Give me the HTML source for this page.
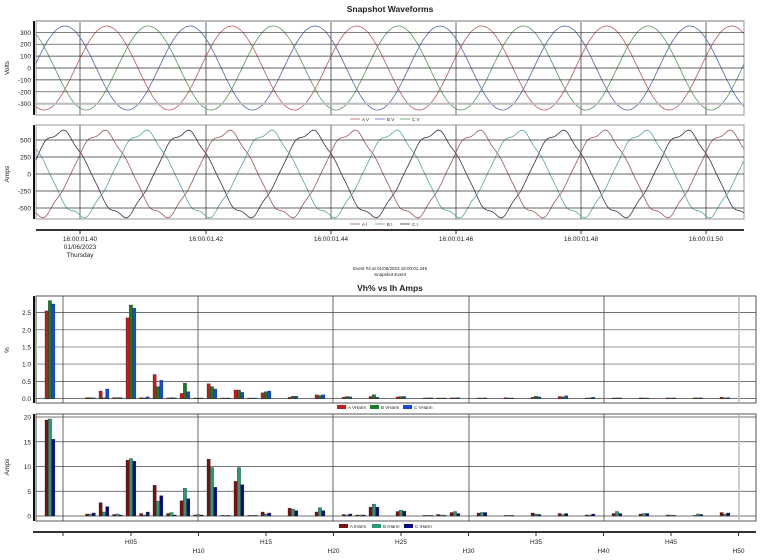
<!DOCTYPE html>
<html><head><meta charset="utf-8"><style>
html,body{margin:0;padding:0;background:#fff;width:768px;height:560px;overflow:hidden}
svg{display:block;font-family:"Liberation Sans",sans-serif}
</style></head><body>
<svg id="s" width="768" height="560" viewBox="0 0 768 560" xmlns="http://www.w3.org/2000/svg"></svg>
<script>
var s=document.getElementById('s'),o='';
function L(x1,y1,x2,y2,c,w){o+='<line x1="'+x1+'" y1="'+y1+'" x2="'+x2+'" y2="'+y2+'" stroke="'+c+'" stroke-width="'+(w||1)+'"/>';}
function T(x,y,t,sz,a,extra){o+='<text x="'+x+'" y="'+y+'" font-size="'+sz+'" text-anchor="'+(a||'middle')+'" fill="#222" '+(extra||'')+'>'+t+'</text>';}
function R(x,y,w,h,c,st){o+='<rect x="'+x+'" y="'+y+'" width="'+w+'" height="'+h+'" fill="'+c+'" '+(st||'')+'/>';}
// titles
T(390,12,'Snapshot Waveforms',8.5,'middle','font-weight="bold"');
// waveform plots
var X0=36,X1=744,vt=[80,206,331,456,581,706];
function wave(top,bot,y0,scale,amp,ph,cols,noise){
  R(X0,top,X1-X0,bot-top,'#fff','stroke="#999" stroke-width="1"');
  vt.forEach(function(x){L(x,top,x,bot,'#444',0.8)});
  for(var k=0;k<3;k++){var d='';for(var x=X0;x<=X1;x+=1){var t=(x-ph-k*41.7)/125*2*Math.PI;var v=Math.cos(t);if(noise)v+=0.04*Math.sin(t*5)+0.03*Math.sin(t*7);var y=y0-amp*v;d+=(x==X0?'M':'L')+x+' '+y.toFixed(1);}
  o+='<path d="'+d+'" fill="none" stroke="'+cols[k]+'" stroke-width="0.8"/>';}
  L(34,top,34,bot,'#111',2);
}
// volt gridlines
wave(21,115,68,11.9,42,65,['#5068b8','#c05858','#58985a'],false);
[300,200,100,0,-100,-200,-300].forEach(function(v){var y=68-v*0.119;L(X0,y,X1,y,v==-300?'#bbb':'#333',v==-300?2:0.7);T(31,y+2.5,v,6.5,'end');});
L(X0,21,X1,21,'#bbb',2);
T(9,68,'Volts',6.5,'middle','transform="rotate(-90 9 68)"');
// legend volts
[['#c05858','A V',360],['#5068b8','B V',385],['#58985a','C V',410]].forEach(function(l){L(l[2]-10,119,l[2],119,l[0],0.8);T(l[2]+2,121,l[1],4.5,'start');});
// current
wave(125,219,174,0.068,42,60,['#403050','#a05858','#58a8a0'],true);
[500,250,0,-250,-500].forEach(function(v){var y=174-v*0.068;L(X0,y,X1,y,'#333',0.7);T(31,y+2.5,v,6.5,'end');});
T(9,174,'Amps',6.5,'middle','transform="rotate(-90 9 174)"');
[['#a05858','A I',360],['#58a8a0','B I',385],['#403050','C I',410]].forEach(function(l){L(l[2]-10,224,l[2],224,l[0],0.8);T(l[2]+2,226,l[1],4.5,'start');});
// time axis
L(36,230,744,230,'#333',2);
var tl=['16:00:01.40','16:00:01.42','16:00:01.44','16:00:01.46','16:00:01.48','16:00:01.50'];
vt.forEach(function(x,i){L(x,230,x,234,'#333',1);T(x,241,tl[i],6.5);});
T(80,249,'01/06/2023',6.5);T(80,257,'Thursday',6.5);
T(390,270,'Event #4 at 01/06/2023 16:00:01.349',4.5);T(390,276,'Snapshot Event',4.5);
T(390,291,'Vh% vs Ih Amps',8.5,'middle','font-weight="bold"');
// bar charts
var BX0=36,BX1=756,vg=[63,198,333,469,604];
function hx(k){return k==1?50:131+(k-5)*13.5;}
var vh={1:[2.55,2.85,2.75],2:[.03,.03,.02],3:[.22,.03,.28],4:[.03,.03,.03],5:[2.35,2.72,2.63],6:[.03,.02,.05],7:[.7,.35,.53],8:[.02,.03,.02],9:[.15,.45,.2],10:[.01,.01,.01],11:[.43,.35,.28],12:[.01,.01,.01],13:[.25,.25,.18],14:[.01,.01,.01],15:[.17,.2,.22],17:[.04,.07,.07],19:[.11,.09,.11],21:[.04,.06,.05],23:[.06,.11,.04],25:[.05,.06,.06],27:[.01,.02,.02],28:[.01,.01,.01],29:[.02,.02,.03],31:[.01,.01,.02],33:[.03,.01,.01],35:[.04,.07,.05],37:[.06,.05,.08],39:[.01,.02,.04],41:[.01,.02,.02],43:[.02,.01,.01],45:[.02,.01,.02],47:[.02,.02,.02],49:[.04,.02,.03]};
var ih={1:[19.4,19.6,15.5],2:[.4,.4,.6],3:[2.7,.8,1.9],4:[.3,.4,.2],5:[11.3,11.6,11.1],6:[.5,.2,.8],7:[6.2,3,4.1],8:[.5,.7,.2],9:[3.1,5.6,3.5],10:[.2,.3,.2],11:[11.5,9.8,5.8],12:[.1,.1,.1],13:[7,9.8,6.3],14:[.1,.1,.1],15:[.8,.4,.6],17:[1.6,1.4,1.1],19:[.8,1.7,1.1],21:[.3,.2,.4],22:[.2,.2,.2],23:[1.8,2.4,1.8],25:[.9,1.2,1],27:[.1,.1,.1],28:[.3,.2,.1],29:[.7,.9,.5],31:[.6,.7,.7],33:[.1,.1,.1],35:[.6,.4,.3],37:[.5,.3,.5],39:[.2,.2,.4],41:[.5,.9,.5],43:[.4,.5,.5],45:[.2,.2,.1],47:[.1,.4,.3],49:[.7,.4,.6]};
function bars(top,bot,y0,ppu,data,cols,grid,lightSet,fmt){
  R(BX0,top,BX1-BX0,bot-top,'#fff','stroke="#555" stroke-width="1"');
  grid.forEach(function(v){var y=y0-v*ppu;var lt=lightSet.indexOf(v)>=0;L(BX0,y,BX1,y,lt?'#bbb':'#444',lt?1.6:0.7);T(31,y+2.5,fmt(v),6.5,'end');});
  vg.forEach(function(x){L(x,top,x,bot,'#444',0.8)});L(739,top,739,bot,'#bbb',1.5);
  for(var k in data){var c=hx(+k)-5;data[k].forEach(function(v,i){var h=Math.max(v*ppu,0.6);R((c+i*3.3).toFixed(1),(y0-h).toFixed(1),3.3,h.toFixed(1),cols[i],'stroke="#222" stroke-width="0.3"');});}
  L(34,top,34,bot,'#111',2);
}
bars(296,403,398.6,34.4,vh,['#c81818','#1a7a28','#1448d8'],[0,.5,1,1.5,2,2.5],[1,1.5],function(v){return v.toFixed(1)});
T(9,350,'%',6.5,'middle','transform="rotate(-90 9 350)"');
[['#c81818','A VHarm',347],['#1a7a28','B VHarm',380],['#1448d8','C VHarm',413]].forEach(function(l){R(l[2]-10,405,9,4,l[0]);T(l[2]+1,409,l[1],4.5,'start');});
bars(414,521,516,4.95,ih,['#7a1010','#2a9a70','#0a0a80'],[0,5,10,15,20],[],function(v){return v});
T(9,467,'Amps',6.5,'middle','transform="rotate(-90 9 467)"');
[['#7a1010','A IHarm',349],['#2a9a70','B IHarm',382],['#0a0a80','C IHarm',414]].forEach(function(l){R(l[2]-10,524,9,4,l[0]);T(l[2]+1,528,l[1],4.5,'start');});
L(33,532,756,532,'#333',2);
[5,10,15,20,25,30,35,40,45,50].forEach(function(k,i){var x=hx(k);L(x,532,x,536,'#333',1);T(x,i%2?553:544,'H'+(k<10?'0'+k:k),6.5);});
L(63,532,63,536,'#333',1);
s.innerHTML=o;
</script>
</body></html>
